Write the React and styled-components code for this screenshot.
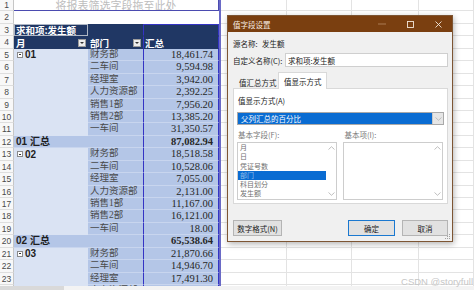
import React from "react";
import styled, { createGlobalStyle } from "styled-components";

const ROW_H = 12.44;

const GlobalStyle = createGlobalStyle`
  html, body {
    margin: 0;
    padding: 0;
    background: #fff;
  }
  body {
    width: 474px;
    height: 290px;
    overflow: hidden;
  }
`;

const groups = [
  {
    month: "01",
    rows: [
      ["财务部", "18,461.74"],
      ["二车间", "9,594.98"],
      ["经理室", "3,942.00"],
      ["人力资源部", "2,392.25"],
      ["销售1部", "7,956.20"],
      ["销售2部", "13,385.20"],
      ["一车间", "31,350.57"]
    ],
    total: "87,082.94"
  },
  {
    month: "02",
    rows: [
      ["财务部", "18,518.58"],
      ["二车间", "10,528.06"],
      ["经理室", "7,055.00"],
      ["人力资源部", "2,131.00"],
      ["销售1部", "11,167.00"],
      ["销售2部", "16,121.00"],
      ["一车间", "18.00"]
    ],
    total: "65,538.64"
  },
  {
    month: "03",
    rows: [
      ["财务部", "21,870.66"],
      ["二车间", "14,946.70"],
      ["经理室", "17,491.30"],
      ["人力资源部", ""]
    ]
  }
];

const baseFields = ["月", "日", "凭证号数", "部门", "科目划分", "发生额"];

/* ---------- page ---------- */

const Screen = styled.div`
  position: relative;
  width: 474px;
  height: 290px;
  overflow: hidden;
  display: flex;
  flex-direction: column;
  background: #fff;
`;

const SheetArea = styled.div`
  display: flex;
  height: 287px;
  margin-top: -1px;
  overflow: hidden;
`;

const BottomStrip = styled.div`
  height: 4px;
  display: flex;
  background: #f3f3f3;
`;

const StripTab = styled.div`
  width: 64px;
  background: #d9d9d9;
`;

const Divider = styled.div`
  width: 2px;
  flex: none;
  background: #6a6ac6;
`;

/* ---------- pivot sheet ---------- */

const PivotSheet = styled.div`
  width: 219px;
  flex: none;
  display: grid;
  grid-template-columns: 14px 74px 55px 76px;
  grid-auto-rows: ${ROW_H}px;
  font-family: "Liberation Serif", "Noto Sans CJK SC", serif;
`;

const RowNum = styled.div`
  box-sizing: border-box;
  border-right: 1px solid #c6c6c6;
  border-bottom: 1px solid #dedede;
  background: #f8f8f8;
  color: #4a4a4a;
  font: 8.5px/${ROW_H}px "Liberation Sans", sans-serif;
  text-align: center;
`;

const FilterCell = styled.div`
  grid-column: span 3;
  box-sizing: border-box;
  border-bottom: 1px solid #4b4bb0;
  border-right: 1px solid #4b4bb0;
  color: #bdbdbd;
  font: 11px/${ROW_H}px "Noto Sans CJK SC", sans-serif;
  text-align: center;
  white-space: nowrap;
  overflow: hidden;
`;

const BlankCell = styled.div`
  grid-column: span 3;
  background: #fff;
`;

const HeadCell = styled.div`
  box-sizing: border-box;
  background: #203764;
  color: #fff;
  font: bold 9.5px/10px "Noto Sans CJK SC", sans-serif;
  display: flex;
  align-items: center;
  justify-content: space-between;
  padding: 0 1px 0 1px;
  white-space: nowrap;
  border: 1px solid ${(p) => (p.$outlined ? "#aeb6c4" : "transparent")};
  ${(p) =>
    p.$colSel &&
    `border-left: 1px solid #3434c4; border-right: 1px solid #3434c4;`}
  ${(p) => p.$top && `border-top: 1px solid #3434c4;`}
`;

const DropButton = styled.span`
  width: 8px;
  height: 8px;
  flex: none;
  box-sizing: border-box;
  background: #ececec;
  border: 1px solid #9c9c9c;
  display: flex;
  align-items: center;
  justify-content: center;
  &::after {
    content: "";
    border-left: 2px solid transparent;
    border-right: 2px solid transparent;
    border-top: 2px solid #333;
  }
`;

const MonthCell = styled.div`
  background: #dae3f3;
  display: flex;
  align-items: center;
  gap: 2px;
  padding-left: 3px;
  font: bold 10px "Liberation Sans", sans-serif;
  color: #1e1e1e;
`;

const Toggle = styled.span`
  width: 6px;
  height: 6px;
  box-sizing: border-box;
  border: 1px solid #8a8a8a;
  background: #fff;
  display: flex;
  align-items: center;
  justify-content: center;
  &::after {
    content: "";
    width: 2px;
    height: 1px;
    background: #333;
  }
`;

const DeptCell = styled.div`
  box-sizing: border-box;
  background: #b4c6e7;
  border-bottom: 1px solid #c8d5ee;
  color: #4a4a4a;
  font-size: 9.5px;
  line-height: ${ROW_H - 1}px;
  padding-left: 2px;
  white-space: nowrap;
  overflow: hidden;
`;

const AmountCell = styled.div`
  box-sizing: border-box;
  background: #b4c6e7;
  border-bottom: 1px solid #c8d5ee;
  border-left: 1px solid #3434c4;
  border-right: 1px solid #3434c4;
  color: #262626;
  font-size: 10.5px;
  font-weight: ${(p) => (p.$bold ? "bold" : "normal")};
  line-height: ${ROW_H - 1}px;
  text-align: right;
  padding-right: 5px;
`;

const TotalLabel = styled.div`
  grid-column: span 2;
  box-sizing: border-box;
  background: #b4c6e7;
  border-bottom: 1px solid #c8d5ee;
  font: bold 10px/${ROW_H - 1}px "Liberation Sans", "Noto Sans CJK SC", sans-serif;
  color: #1e1e1e;
  padding-left: 2px;
`;

/* ---------- plain sheet on the right ---------- */

const PlainSheet = styled.div`
  flex: 1;
  display: grid;
  grid-template-columns: 66px 65px 67px 1fr;
  grid-auto-rows: ${ROW_H}px;
`;

const PlainCell = styled.div`
  box-sizing: border-box;
  border-right: 1px solid #e3e3e3;
  border-bottom: 1px solid #e3e3e3;
`;

/* ---------- dialog ---------- */

const Dialog = styled.div`
  position: absolute;
  left: 227px;
  top: 15px;
  width: 226px;
  height: 227px;
  box-sizing: border-box;
  background: #f0f0f0;
  border: 1px solid #7d5533;
  box-shadow: 1px 2px 6px rgba(0, 0, 0, 0.3);
  display: flex;
  flex-direction: column;
  font-family: "Noto Sans CJK SC", "Liberation Sans", sans-serif;
  font-size: 7.5px;
  color: #222;
`;

const TitleBar = styled.div`
  height: 16px;
  flex: none;
  display: flex;
  align-items: center;
  background: #7a3f10;
  color: #f6ece2;
`;

const TitleText = styled.div`
  flex: 1;
  padding-left: 5px;
  font-size: 7.5px;
`;

const WinButton = styled.div`
  width: 28px;
  height: 16px;
  display: flex;
  align-items: center;
  justify-content: center;
`;

const DialogBody = styled.div`
  flex: 1;
  display: flex;
  flex-direction: column;
  padding: 0 4px 0 5px;
`;

const FieldRow = styled.div`
  display: flex;
  align-items: center;
  margin-top: ${(p) => p.$gap}px;
  height: ${(p) => p.$h}px;
`;

const FieldLabel = styled.span`
  width: ${(p) => p.$w}px;
  flex: none;
  white-space: nowrap;
`;

const TextInput = styled.div`
  flex: 1;
  height: 100%;
  box-sizing: border-box;
  background: #fff;
  border: 1px solid #cfcfcf;
  padding-left: 2px;
  display: flex;
  align-items: center;
`;

const Tabs = styled.div`
  display: flex;
  align-items: flex-end;
  margin-top: 5px;
  height: 17px;
  margin-bottom: -1px;
  position: relative;
  z-index: 1;
`;

const Tab = styled.div`
  width: ${(p) => p.$w}px;
  height: ${(p) => (p.$active ? 17 : 15)}px;
  box-sizing: border-box;
  padding-left: 5px;
  display: flex;
  align-items: center;
  background: ${(p) => (p.$active ? "#fff" : "transparent")};
  border: 1px solid ${(p) => (p.$active ? "#d9d9d9" : "transparent")};
  border-bottom: none;
  white-space: nowrap;
`;

const Panel = styled.div`
  height: 116px;
  box-sizing: border-box;
  background: #fff;
  border: 1px solid #d9d9d9;
  padding: 6px 3px 3px 3px;
  display: flex;
  flex-direction: column;
`;

const PanelLabel = styled.div`
  height: 12px;
  line-height: 12px;
  padding-left: 1px;
  color: #222;
`;

const Select = styled.div`
  margin-top: 5px;
  height: 13px;
  box-sizing: border-box;
  display: flex;
  border: 1px solid #a9a9a9;
`;

const SelectValue = styled.div`
  flex: 1;
  background: #0a6cd2;
  color: #fff;
  padding-left: 3px;
  display: flex;
  align-items: center;
`;

const SelectArrow = styled.div`
  width: 10px;
  background: #e6e6e6;
  border-left: 1px solid #c8c8c8;
  display: flex;
  align-items: center;
  justify-content: center;
`;

const LabelRow = styled.div`
  margin-top: 5px;
  height: 10px;
  display: flex;
  gap: 6px;
  color: #7a7a7a;
  & > span {
    width: 100px;
    padding-left: 1px;
    line-height: 10px;
  }
`;

const ListsRow = styled.div`
  margin-top: 2px;
  height: 58px;
  display: flex;
  gap: 6px;
`;

const ListBox = styled.div`
  width: 100px;
  height: 58px;
  box-sizing: border-box;
  border: 1px solid #cdcdcd;
  background: #fff;
  display: flex;
  overflow: hidden;
`;

const ListItems = styled.div`
  flex: 1;
  display: flex;
  flex-direction: column;
`;

const ListItem = styled.div`
  height: 9.3px;
  flex: none;
  line-height: 9.3px;
  font-size: 7px;
  padding-left: 2px;
  color: ${(p) => (p.$selected ? "rgba(255,255,255,0.55)" : "#707070")};
  background: ${(p) => (p.$selected ? "#0a6cd2" : "transparent")};
`;

const ScrollTrack = styled.div`
  width: 10px;
  flex: none;
  display: flex;
  flex-direction: column;
  justify-content: space-between;
  align-items: center;
  padding: 3px 0;
`;

const ButtonRow = styled.div`
  margin-top: 16px;
  height: 16px;
  display: flex;
  gap: 7px;
`;

const Spacer = styled.div`
  flex: 1;
`;

const PushButton = styled.div`
  width: ${(p) => p.$w}px;
  box-sizing: border-box;
  background: #e1e1e1;
  border: ${(p) => (p.$default ? "1.5px solid #1a78d0" : "1px solid #b4b4b4")};
  display: flex;
  align-items: center;
  justify-content: center;
  white-space: nowrap;
`;

const Grip = styled.svg`
  position: absolute;
  right: 1px;
  bottom: 1px;
`;

const Watermark = styled.div`
  position: absolute;
  right: 1px;
  bottom: 3px;
  color: #c6c6c6;
  font: 9.5px "Liberation Sans", sans-serif;
`;

const Chevron = ({ up }) => (
  <svg width="7" height="4" viewBox="0 0 7 4">
    <path
      d={up ? "M0.5 3.5L3.5 0.7L6.5 3.5" : "M0.5 0.5L3.5 3.3L6.5 0.5"}
      fill="none"
      stroke="#b8b8b8"
      strokeWidth="0.9"
    />
  </svg>
);

function List({ items, selected }) {
  return (
    <ListBox>
      <ListItems>
        {items.map((t, i) => (
          <ListItem key={t} $selected={i === selected}>
            {t}
          </ListItem>
        ))}
      </ListItems>
      <ScrollTrack>
        <Chevron up />
        <Chevron />
      </ScrollTrack>
    </ListBox>
  );
}

function pivotRows() {
  const out = [];
  let r = 5;
  groups.forEach((g) => {
    g.rows.forEach((row, i) => {
      out.push(
        <React.Fragment key={r}>
          <RowNum>{r}</RowNum>
          <MonthCell>
            {i === 0 && (
              <>
                <Toggle />
                {g.month}
              </>
            )}
          </MonthCell>
          <DeptCell>{row[0]}</DeptCell>
          <AmountCell>{row[1]}</AmountCell>
        </React.Fragment>
      );
      r++;
    });
    if (g.total) {
      out.push(
        <React.Fragment key={r}>
          <RowNum>{r}</RowNum>
          <TotalLabel>{g.month} 汇总</TotalLabel>
          <AmountCell $bold>{g.total}</AmountCell>
        </React.Fragment>
      );
      r++;
    }
  });
  return out;
}

export default function App() {
  const plain = [];
  for (let i = 0; i < 24 * 4; i++) plain.push(<PlainCell key={i} />);

  return (
    <Screen>
      <GlobalStyle />
      <SheetArea>
        <PivotSheet>
          <RowNum>1</RowNum>
          <FilterCell>将报表筛选字段拖至此处</FilterCell>
          <RowNum>2</RowNum>
          <BlankCell />
          <RowNum>3</RowNum>
          <HeadCell $outlined>求和项:发生额</HeadCell>
          <HeadCell />
          <HeadCell $colSel $top />
          <RowNum>4</RowNum>
          <HeadCell>
            月<DropButton />
          </HeadCell>
          <HeadCell>
            部门<DropButton />
          </HeadCell>
          <HeadCell $colSel>汇总</HeadCell>
          {pivotRows()}
        </PivotSheet>
        <Divider />
        <PlainSheet>{plain}</PlainSheet>
      </SheetArea>
      <BottomStrip>
        <StripTab />
      </BottomStrip>

      <Dialog>
        <TitleBar>
          <TitleText>值字段设置</TitleText>
          <WinButton>
            <svg width="8" height="2" viewBox="0 0 8 2">
              <path d="M0 1H8" stroke="#b88a66" strokeWidth="0.8" />
            </svg>
          </WinButton>
          <WinButton>
            <svg width="7" height="7" viewBox="0 0 7 7">
              <rect x="0.5" y="0.5" width="6" height="6" fill="none" stroke="#f3e6da" strokeWidth="0.9" />
            </svg>
          </WinButton>
          <WinButton>
            <svg width="7" height="7" viewBox="0 0 7 7">
              <path d="M0.5 0.5L6.5 6.5M6.5 0.5L0.5 6.5" stroke="#f3e6da" strokeWidth="0.9" />
            </svg>
          </WinButton>
        </TitleBar>
        <DialogBody>
          <FieldRow $gap={3} $h={16}>
            <FieldLabel $w={29}>源名称:</FieldLabel>
            <span>发生额</span>
          </FieldRow>
          <FieldRow $gap={2} $h={14}>
            <FieldLabel $w={52}>自定义名称(C):</FieldLabel>
            <TextInput>求和项:发生额</TextInput>
          </FieldRow>
          <Tabs>
            <Tab $w={45}>值汇总方式</Tab>
            <Tab $w={49} $active>
              值显示方式
            </Tab>
          </Tabs>
          <Panel>
            <PanelLabel>值显示方式(A)</PanelLabel>
            <Select>
              <SelectValue>父列汇总的百分比</SelectValue>
              <SelectArrow>
                <Chevron />
              </SelectArrow>
            </Select>
            <LabelRow>
              <span>基本字段(F):</span>
              <span>基本项(I):</span>
            </LabelRow>
            <ListsRow>
              <List items={baseFields} selected={3} />
              <List items={[]} />
            </ListsRow>
          </Panel>
          <ButtonRow>
            <PushButton $w={49}>数字格式(N)</PushButton>
            <Spacer />
            <PushButton $w={47} $default>
              确定
            </PushButton>
            <PushButton $w={46}>取消</PushButton>
          </ButtonRow>
        </DialogBody>
        <Grip width="6" height="6" viewBox="0 0 6 6">
          <g fill="#a0a0a0">
            <rect x="4" y="0" width="1" height="1" />
            <rect x="2" y="2" width="1" height="1" />
            <rect x="4" y="2" width="1" height="1" />
            <rect x="0" y="4" width="1" height="1" />
            <rect x="2" y="4" width="1" height="1" />
            <rect x="4" y="4" width="1" height="1" />
          </g>
        </Grip>
      </Dialog>
      <Watermark>CSDN @storyfull</Watermark>
    </Screen>
  );
}
